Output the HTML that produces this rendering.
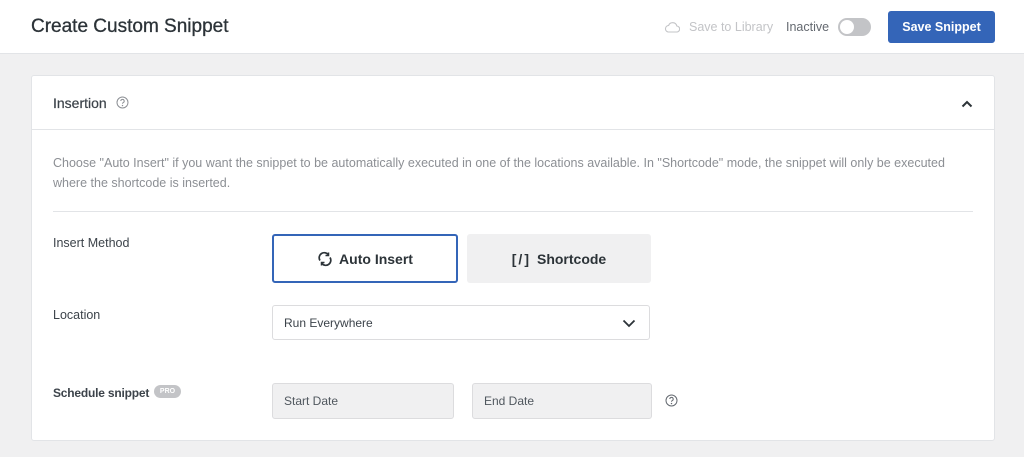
<!DOCTYPE html>
<html><head><style>
*{box-sizing:border-box;margin:0;padding:0}
body{width:1024px;height:457px;background:#f0f0f1;font-family:"Liberation Sans",sans-serif;position:relative;overflow:hidden;color:#3c434a}
.a{position:absolute}
#hdr{left:0;top:0;width:1024px;height:54px;background:#fff;border-bottom:1px solid #e2e4e7}
#card{left:31px;top:75px;width:964px;height:366px;background:#fff;border:1px solid #e2e4e7;border-radius:3px}
.lbl{font-size:12.5px;color:#3c434a}
.btn{border-radius:3px;font-size:14px;font-weight:bold;display:flex;align-items:center;justify-content:center;color:#2c3338}
.inp{border:1px solid #dcdcde;border-radius:3px;font-size:12px;display:flex;align-items:center;padding-left:11px;color:#50575e}
</style></head><body>
<div id="hdr" class="a">
 <div class="a" style="left:31px;top:16px;font-size:19px;color:#2c3338;-webkit-text-stroke:0.3px #2c3338">Create Custom Snippet</div>
 <svg class="a" style="left:664px;top:21px" width="16" height="12" viewBox="0 0 16 12"><path d="M4 11h8.5a3 3 0 0 0 .3-6A4.3 4.3 0 0 0 4.6 4.5 3.3 3.3 0 0 0 4 11z" fill="none" stroke="#c3c4c7" stroke-width="1.1"/></svg>
 <div class="a" style="left:689px;top:20px;font-size:12.5px;color:#c3c4c7">Save to Library</div>
 <div class="a" style="left:786px;top:20px;font-size:12.5px;color:#646970">Inactive</div>
 <div class="a" style="left:838px;top:18px;width:33px;height:18px;border-radius:9px;background:#c3c4c7"><div class="a" style="left:2px;top:2px;width:14px;height:14px;border-radius:50%;background:#fff"></div></div>
 <div class="a btn" style="left:888px;top:11px;width:107px;height:32px;background:#3465b8;color:#fff;font-size:12.5px">Save Snippet</div>
</div>
<div id="card" class="a">
 <div class="a" style="left:0;top:53px;width:962px;height:1px;background:#e2e4e7"></div>
 <div class="a" style="left:21px;top:19px;font-size:14px;color:#3c434a;-webkit-text-stroke:0.2px #3c434a">Insertion</div>
 <svg class="a" style="left:84px;top:20px" width="13" height="13" viewBox="0 0 13 13"><circle cx="6.5" cy="6.5" r="5.5" fill="none" stroke="#8c8f94"/><path d="M4.8 5a1.7 1.7 0 1 1 2.4 1.6c-.5.3-.7.6-.7 1.2" fill="none" stroke="#8c8f94"/><circle cx="6.5" cy="9.6" r=".7" fill="#8c8f94"/></svg>
 <svg class="a" style="left:929px;top:24px" width="12" height="8" viewBox="0 0 12 8"><path d="M1.5 6.5 6 2l4.5 4.5" fill="none" stroke="#2c3338" stroke-width="2"/></svg>
 <div class="a" style="left:21px;top:77px;width:905px;font-size:12.5px;line-height:20px;color:#8c8f94">Choose "Auto Insert" if you want the snippet to be automatically executed in one of the locations available. In "Shortcode" mode, the snippet will only be executed where the shortcode is inserted.</div>
 <div class="a" style="left:21px;top:135px;width:920px;height:1px;background:#e2e4e7"></div>
 <div class="a lbl" style="left:21px;top:160px">Insert Method</div>
 <div class="a btn" style="left:240px;top:158px;width:186px;height:49px;border:2px solid #3465b8;background:#fff"><svg width="16" height="16" viewBox="0 0 16 16" style="margin-right:6px"><path d="M3 9.5A5 5 0 0 1 11.5 4M13 6.5A5 5 0 0 1 4.5 12" fill="none" stroke="#2c3338" stroke-width="1.7"/><path d="M11.5 1.5v3h-3M4.5 14.5v-3h3" fill="none" stroke="#2c3338" stroke-width="1.5"/></svg>Auto Insert</div>
 <div class="a btn" style="left:435px;top:158px;width:184px;height:49px;background:#f0f0f1"><span style="margin-right:6px;letter-spacing:2px">[/]</span>Shortcode</div>
 <div class="a lbl" style="left:21px;top:232px">Location</div>
 <div class="a inp" style="left:240px;top:229px;width:378px;height:35px;color:#3c434a">Run Everywhere</div>
 <svg class="a" style="left:590px;top:243px" width="14" height="9" viewBox="0 0 14 9"><path d="M1.5 1.5 7 7l5.5-5.5" fill="none" stroke="#2c3338" stroke-width="1.8"/></svg>
 <div class="a lbl" style="left:21px;top:310px;font-weight:bold;font-size:12px;letter-spacing:-0.2px">Schedule snippet</div>
 <div class="a" style="left:122px;top:309px;width:27px;height:13px;border-radius:7px;background:#c3c4c7;color:#fff;font-size:7px;font-weight:bold;text-align:center;line-height:13px">PRO</div>
 <div class="a inp" style="left:240px;top:307px;width:182px;height:36px;background:#f0f0f1">Start Date</div>
 <div class="a inp" style="left:440px;top:307px;width:180px;height:36px;background:#f0f0f1">End Date</div>
 <svg class="a" style="left:633px;top:318px" width="13" height="13" viewBox="0 0 13 13"><circle cx="6.5" cy="6.5" r="5.5" fill="none" stroke="#646970"/><path d="M4.8 5a1.7 1.7 0 1 1 2.4 1.6c-.5.3-.7.6-.7 1.2" fill="none" stroke="#646970"/><circle cx="6.5" cy="9.6" r=".7" fill="#646970"/></svg>
</div>
</body></html>
